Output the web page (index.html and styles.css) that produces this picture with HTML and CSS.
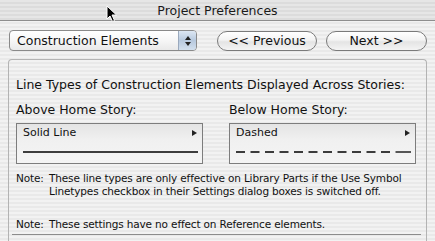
FILE: index.html
```html
<!DOCTYPE html>
<html>
<head>
<meta charset="utf-8">
<link rel="stylesheet" href="styles.css">
</head>
<body>
<div class="window">
  <div class="titlebar">Project Preferences</div>
  <div class="toolbar">
    <div class="popup">
      <span class="popup-label">Construction Elements</span>
      <span class="popup-arrows">
        <svg width="8" height="12" viewBox="0 0 8 12"><path d="M4 1 L7 5 L1 5 Z" fill="#222"/><path d="M1 7 L7 7 L4 11 Z" fill="#222"/></svg>
      </span>
    </div>
    <div class="btn btn-prev">&lt;&lt; Previous</div>
    <div class="btn btn-next">Next &gt;&gt;</div>
  </div>
  <div class="group">
    <div class="heading">Line Types of Construction Elements Displayed Across Stories:</div>
    <div class="cols">
      <div class="col">
        <div class="label">Above Home Story:</div>
        <div class="linebox">
          <div class="linebox-top"><span>Solid Line</span><span class="tri"></span></div>
          <svg class="sample" width="175" height="4" viewBox="0 0 175 4"><line x1="0" y1="2" x2="175" y2="2" stroke="#000" stroke-width="1.3"/></svg>
        </div>
      </div>
      <div class="col col-right">
        <div class="label">Below Home Story:</div>
        <div class="linebox">
          <div class="linebox-top"><span>Dashed</span><span class="tri"></span></div>
          <svg class="sample" width="175" height="4" viewBox="0 0 175 4"><line x1="0" y1="2" x2="154" y2="2" stroke="#000" stroke-width="1.3" stroke-dasharray="9 5.5"/><line x1="159.5" y1="2" x2="175" y2="2" stroke="#000" stroke-width="1.3"/></svg>
        </div>
      </div>
    </div>
    <div class="note">
      <span class="note-key">Note:</span>
      <span class="note-text">These line types are only effective on Library Parts if the Use Symbol<br>Linetypes checkbox in their Settings dialog boxes is switched off.</span>
    </div>
    <div class="note note2">
      <span class="note-key">Note:</span>
      <span class="note-text">These settings have no effect on Reference elements.</span>
    </div>
    <div class="sep"></div>
  </div>
  <svg class="cursor" width="12" height="18" viewBox="0 0 12 18"><path d="M1 1 L1 14 L4 11 L6.5 16.5 L8.5 15.5 L6 10 L10.5 10 Z" fill="#000" stroke="#fff" stroke-width="1"/></svg>
</div>
</body>
</html>
```
FILE: styles.css
```css
html, body {
  margin: 0;
  padding: 0;
}
body {
  width: 435px;
  height: 241px;
  overflow: hidden;
  font-family: "DejaVu Sans", "Noto Sans", sans-serif;
  color: #111;
}
.window {
  position: relative;
  width: 435px;
  height: 241px;
  overflow: hidden;
  background: repeating-linear-gradient(to bottom, #f2f2f2 0px, #f2f2f2 2px, #e9e9e9 2px, #e9e9e9 4px);
}
.titlebar {
  height: 21px;
  box-sizing: border-box;
  border-bottom: 1px solid #8e8e8e;
  background: repeating-linear-gradient(to bottom, #e6e6e6 0px, #e6e6e6 2px, #dcdcdc 2px, #dcdcdc 4px);
  text-align: center;
  font-size: 12.5px;
  line-height: 21px;
  color: #1a1a1a;
}
.toolbar {
  display: flex;
  align-items: center;
  padding: 9px 0 0 9px;
  height: 21px;
}
.popup {
  width: 188px;
  height: 21px;
  box-sizing: border-box;
  border: 1px solid #8a8a8a;
  border-radius: 4px;
  background: linear-gradient(to bottom, #ffffff 0%, #f6f6f6 50%, #e9e9e9 100%);
  display: flex;
  align-items: center;
  font-size: 12.5px;
  overflow: hidden;
}
.popup-label {
  flex: 1;
  padding-left: 7px;
}
.popup-arrows {
  width: 17px;
  height: 19px;
  display: flex;
  align-items: center;
  justify-content: center;
  background: linear-gradient(to bottom, #dde7f3 0%, #b7c9de 50%, #d3e0ee 100%);
  border-left: 1px solid #9aa9bd;
}
.btn {
  height: 20px;
  box-sizing: border-box;
  border: 1px solid #7a7a7a;
  border-radius: 10px;
  background: linear-gradient(to bottom, #ffffff 0%, #f3f3f3 45%, #e4e4e4 55%, #f4f4f4 100%);
  font-size: 12.5px;
  line-height: 18px;
  text-align: center;
}
.btn-prev {
  width: 100px;
  margin-left: 20px;
}
.btn-next {
  width: 101px;
  margin-left: 9px;
}
.group {
  margin: 8px 0 0 8px;
  width: 419px;
  height: 182px;
  box-sizing: border-box;
  border: 1px solid #b3b3b3;
  border-bottom: none;
  border-radius: 4px 4px 0 0;
  padding: 17px 0 0 7px;
}
.heading {
  font-size: 12.5px;
  line-height: 15px;
  white-space: nowrap;
}
.cols {
  display: flex;
  margin-top: 10px;
}
.col {
  width: 213px;
  flex: none;
}
.col-right {
  width: 190px;
}
.label {
  font-size: 12.5px;
  line-height: 15px;
}
.linebox {
  margin-top: 6px;
  width: 187px;
  height: 41px;
  box-sizing: border-box;
  border: 1px solid #7d7d7d;
  background: linear-gradient(to bottom, #e4e4e4 0%, #f0f0f0 40%, #f4f4f4 100%);
  padding: 0 0 0 6px;
}
.linebox-top {
  display: flex;
  justify-content: space-between;
  align-items: center;
  font-size: 11px;
  line-height: 17px;
  padding-right: 5px;
}
.tri {
  width: 0;
  height: 0;
  border-top: 3.5px solid transparent;
  border-bottom: 3.5px solid transparent;
  border-left: 5px solid #222;
}
.sample {
  display: block;
  margin-top: 9px;
}
.note {
  display: flex;
  font-size: 10.5px;
  letter-spacing: -0.15px;
  line-height: 13px;
  margin-top: 8px;
  white-space: nowrap;
}
.note-key {
  width: 33px;
  flex: none;
}
.note2 {
  margin-top: 20px;
}
.sep {
  margin: 3px 0 0 -4px;
  width: 409px;
  height: 1px;
  background: #8c8c8c;
}
.cursor {
  position: absolute;
  left: 106px;
  top: 5px;
}
```
